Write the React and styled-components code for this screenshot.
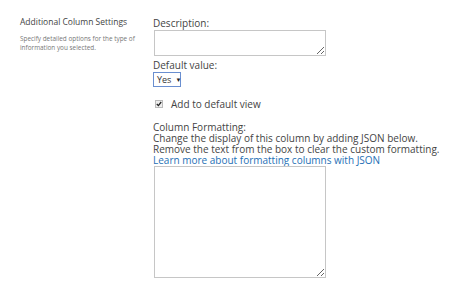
import React from 'react';
import styled, { createGlobalStyle } from 'styled-components';

const Global = createGlobalStyle`
  html, body { margin: 0; padding: 0; background: #fff; }
  body { font-family: "Open Sans", "Liberation Sans", sans-serif; color: #444; }
`;

const Page = styled.div`
  display: flex;
  padding: 16px 0 0 20px;
  width: 474px;
  height: 286px;
  box-sizing: border-box;
  overflow: hidden;
`;

const Side = styled.div`
  width: 133px;
  flex-shrink: 0;
`;

const SideTitle = styled.div`
  font-size: 8.5px;
  color: #444;
  line-height: 11px;
  margin-bottom: 7px;
`;

const SideText = styled.div`
  font-size: 6.4px;
  color: #777;
  line-height: 9px;
`;

const Main = styled.div`
  display: flex;
  flex-direction: column;
  font-size: 10px;
  color: #444;
`;

const Label = styled.div`
  line-height: 12px;
  margin-top: ${(p) => p.top || 0}px;
`;

const Area = styled.textarea`
  display: block;
  width: ${(p) => p.w}px;
  height: ${(p) => p.h}px;
  box-sizing: border-box;
  border: 1px solid #c6c6c6;
  margin: ${(p) => p.top ?? 1}px 0 0 1px;
  padding: 0;
  resize: both;
  font: inherit;
`;

const Select = styled.div`
  display: flex;
  align-items: center;
  gap: 4px;
  width: 28px;
  height: 15px;
  box-sizing: border-box;
  border: 1px solid #6a8fd0;
  padding: 0 3px;
  margin: 1px 0 0 0;
  font-size: 9px;
  color: #333;
`;

const Arrow = styled.span`
  font-size: 6px;
  color: #222;
`;

const CheckRow = styled.label`
  display: flex;
  align-items: center;
  gap: 8px;
  margin: 11px 0 0 2px;
  line-height: 12px;
`;

const Box = styled.span`
  width: 8px;
  height: 8px;
  box-sizing: border-box;
  border: 1px solid #bbb;
  background: #eee;
  display: flex;
  align-items: center;
  justify-content: center;
`;

const Link = styled.a`
  color: #1e6fb5;
  text-decoration: none;
  line-height: 11px;
`;

const Line = styled.div`
  line-height: 11px;
`;

export default function App() {
  return (
    <>
      <Global />
      <Page>
        <Side>
          <SideTitle>Additional Column Settings</SideTitle>
          <SideText>
            Specify detailed options for the type of
            <br />
            information you selected.
          </SideText>
        </Side>
        <Main>
          <Label top={1}>Description:</Label>
          <Area w={172} h={26} />
          <Label top={3}>Default value:</Label>
          <Select>
            Yes <Arrow>▼</Arrow>
          </Select>
          <CheckRow>
            <Box>
              <svg width="6" height="6" viewBox="0 0 6 6">
                <path d="M0.8 3 L2.4 4.6 L5.2 1" stroke="#222" strokeWidth="1.3" fill="none" />
              </svg>
            </Box>
            Add to default view
          </CheckRow>
          <Label top={11}>Column Formatting:</Label>
          <Line>Change the display of this column by adding JSON below.</Line>
          <Line>Remove the text from the box to clear the custom formatting.</Line>
          <Link href="#">Learn more about formatting columns with JSON</Link>
          <Area w={172} h={112} top={0} />
        </Main>
      </Page>
    </>
  );
}
